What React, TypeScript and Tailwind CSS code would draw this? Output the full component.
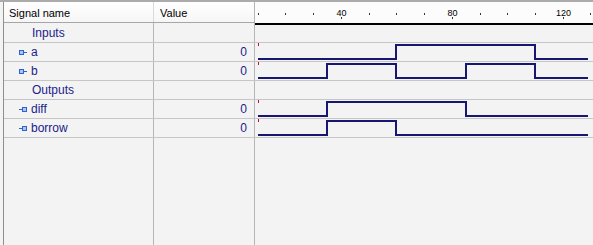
import React from "react";

type Sig = { name: string; dir: "in" | "out"; value: string; edges: number[] };

const groups: { title: string; signals: Sig[] }[] = [
  {
    title: "Inputs",
    signals: [
      { name: "a", dir: "in", value: "0", edges: [60, 110] },
      { name: "b", dir: "in", value: "0", edges: [35, 60, 85, 110] },
    ],
  },
  {
    title: "Outputs",
    signals: [
      { name: "diff", dir: "out", value: "0", edges: [35, 85] },
      { name: "borrow", dir: "out", value: "0", edges: [35, 60] },
    ],
  },
];

// time -> x inside the wave pane
const tx = (t: number) => Math.round(85.9 + (t - 40) * 2.773);
const END_X = 333;
const HI = 2;
const LO = 16;

const wavePoints = (edges: number[]) => {
  let level = LO;
  const pts: string[] = [`${tx(10)},${level}`];
  edges.forEach((t) => {
    const x = tx(t);
    pts.push(`${x},${level}`);
    level = level === LO ? HI : LO;
    pts.push(`${x},${level}`);
  });
  pts.push(`${END_X},${level}`);
  return pts.join(" ");
};

const PortIcon = ({ dir }: { dir: "in" | "out" }) => (
  <svg width="8" height="5" viewBox="0 0 8 5" className="shrink-0">
    {dir === "in" ? (
      <>
        <rect x="0.5" y="0.5" width="4" height="4" fill="#a9c6f3" stroke="#2f62cf" />
        <line x1="5" y1="2.5" x2="8" y2="2.5" stroke="#2f62cf" />
      </>
    ) : (
      <>
        <line x1="0" y1="2.5" x2="3" y2="2.5" stroke="#2f62cf" />
        <rect x="3.5" y="0.5" width="4" height="4" fill="#a9c6f3" stroke="#2f62cf" />
      </>
    )}
  </svg>
);

const rulerTicks = [10, 20, 30, 50, 60, 70, 90, 100, 110, 130];
const rulerLabels = [40, 80, 120];

export default function App() {
  return (
    <div className="w-[593px] h-[245px] overflow-hidden bg-[#f3f3f3] border-t-2 border-[#ababab] font-['Liberation_Sans',Arial,sans-serif] text-[12px] flex pl-[3px]">
      {/* signal name / value pane */}
      <div className="w-[252px] flex flex-col border-l border-[#8f8f8f]">
        <div className="flex h-[21px] border-b border-[#a6a6a6] bg-gradient-to-b from-white to-[#f6f6f6] text-black text-[11px]">
          <div className="w-[150px] border-r border-[#dadada] pl-[5px] pt-[3px]">Signal name</div>
          <div className="w-[101px] border-r border-[#b5b5b5] pl-[6px] pt-[3px]">Value</div>
        </div>
        {groups.map((g, gi) => (
          <React.Fragment key={g.title}>
            <div className={`flex ${gi === 0 ? "h-[20px]" : "h-[19px]"} border-b border-[#c6c6c6] text-[#1c1c8c]`}>
              <div className="w-[150px] border-r border-[#b5b5b5] pl-[28px] flex items-center">{g.title}</div>
              <div className="w-[101px] border-r border-[#b5b5b5]" />
            </div>
            {g.signals.map((s) => (
              <div key={s.name} className="flex h-[19px] border-b border-[#c6c6c6] text-[#1c1c8c]">
                <div className="w-[150px] border-r border-[#b5b5b5] pl-[15px] flex items-center gap-[4px]">
                  <PortIcon dir={s.dir} />
                  <span>{s.name}</span>
                </div>
                <div className="w-[101px] border-r border-[#b5b5b5] pr-[7px] flex items-center justify-end">
                  {s.value}
                </div>
              </div>
            ))}
          </React.Fragment>
        ))}
        <div className="flex flex-1">
          <div className="w-[150px] border-r border-[#b5b5b5]" />
          <div className="w-[101px] border-r border-[#b5b5b5]" />
        </div>
      </div>

      {/* waveform pane */}
      <div className="flex-1 flex flex-col">
        <div className="relative h-[23px] bg-[#fcfcfc] border-b-2 border-black">
          {rulerTicks.map((t) => (
            <div key={t} className="absolute top-[11px] w-px h-[2px] bg-[#333]" style={{ left: tx(t) }} />
          ))}
          {rulerLabels.map((t) => (
            <React.Fragment key={t}>
              <span
                className="absolute top-[6px] -translate-x-1/2 text-[9px] leading-[10px] text-black"
                style={{ left: tx(t) + 0.5 }}
              >
                {t}
              </span>
              <div className="absolute top-[15px] w-px h-[2px] bg-[#333]" style={{ left: tx(t) }} />
            </React.Fragment>
          ))}
        </div>
        {groups.map((g, gi) => (
          <React.Fragment key={g.title}>
            <div className={`${gi === 0 ? "h-[18px]" : "h-[19px]"} border-b border-[#c6c6c6]`} />
            {g.signals.map((s) => (
              <div key={s.name} className="h-[19px] border-b border-[#c6c6c6]">
                <svg width="338" height="18" className="block">
                  <rect x="3" y="0" width="1" height="3" fill="#c8102e" />
                  <polyline
                    points={wavePoints(s.edges)}
                    fill="none"
                    stroke="#171772"
                    strokeWidth="2"
                    shapeRendering="crispEdges"
                  />
                </svg>
              </div>
            ))}
          </React.Fragment>
        ))}
        <div className="flex-1" />
      </div>
    </div>
  );
}
